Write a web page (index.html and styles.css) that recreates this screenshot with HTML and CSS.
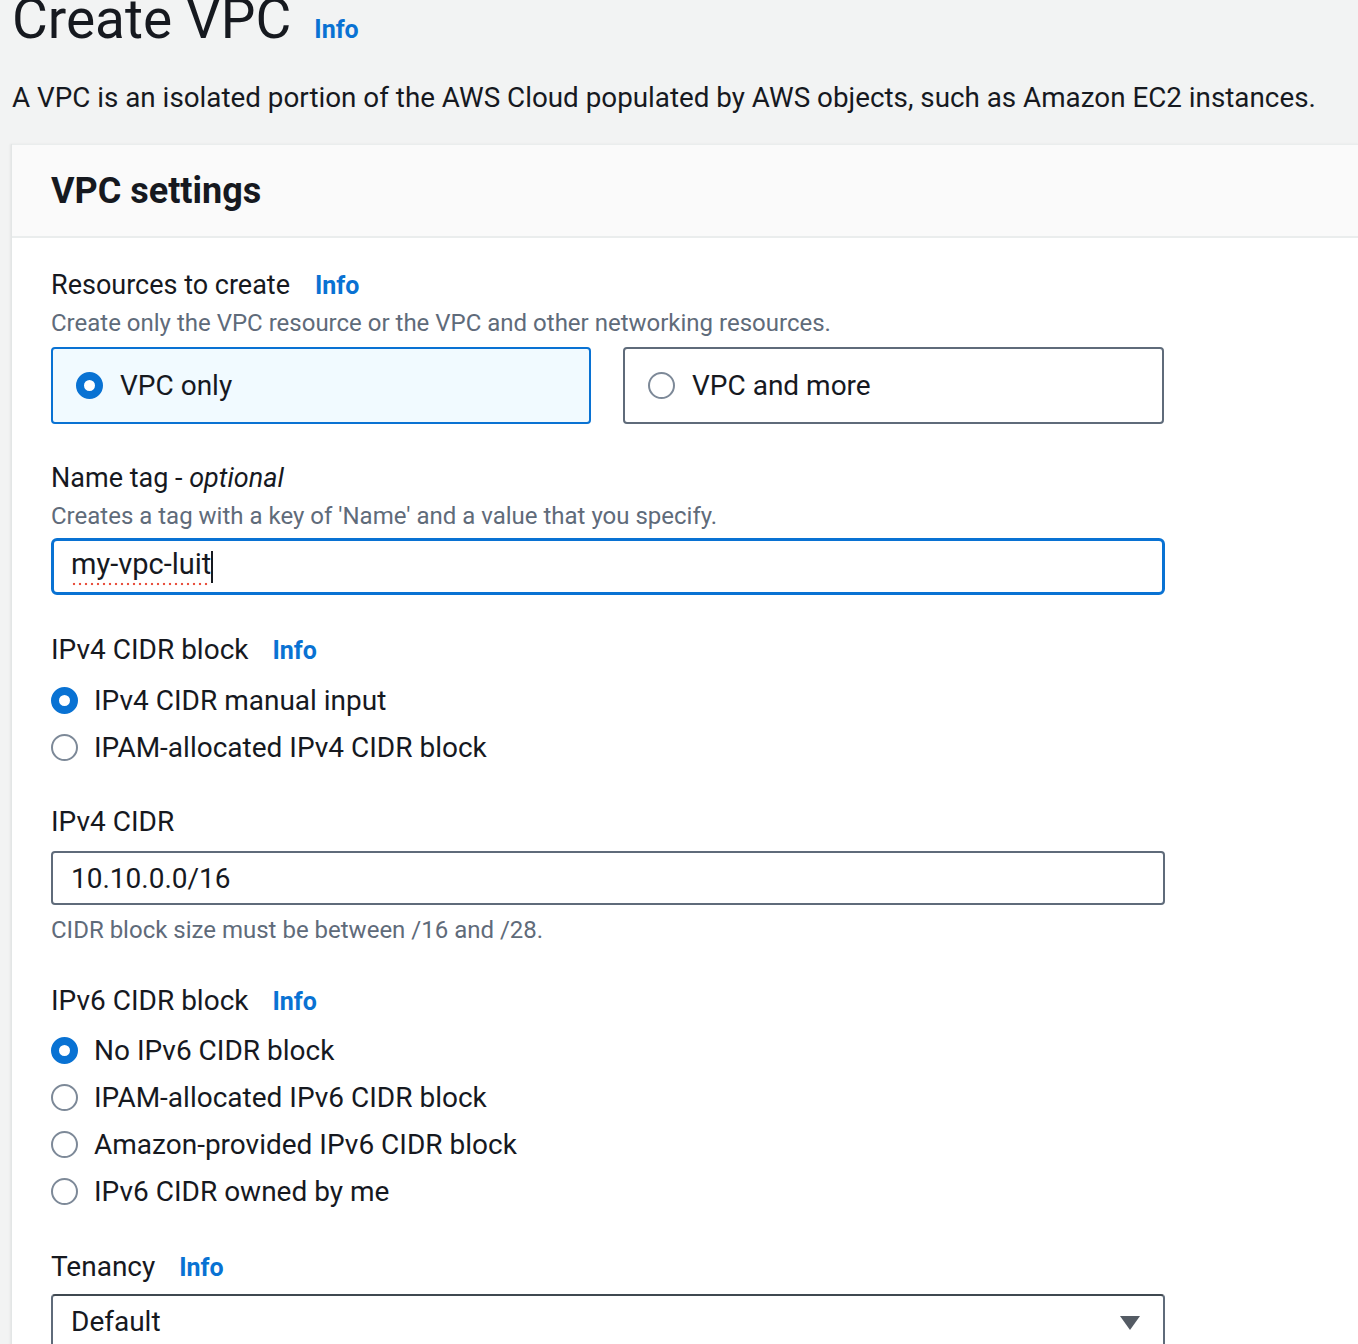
FILE: index.html
```html
<!DOCTYPE html>
<html lang="en">
<head>
<meta charset="utf-8">
<title>Create VPC</title>
<link rel="stylesheet" href="styles.css">
</head>
<body>
<div class="page">
  <header class="page-header">
    <div class="title-row">
      <h1 class="title">Create VPC</h1>
      <a class="info title-info" href="#">Info</a>
    </div>
    <p class="page-desc">A VPC is an isolated portion of the AWS Cloud populated by AWS objects, such as Amazon EC2 instances.</p>
  </header>

  <section class="card">
    <div class="card-header">
      <h2 class="card-title">VPC settings</h2>
    </div>
    <div class="card-body">

      <div class="field">
        <div class="label-row"><span class="label label-sm">Resources to create</span><a class="info" href="#">Info</a></div>
        <div class="desc">Create only the VPC resource or the VPC and other networking resources.</div>
        <div class="tiles">
          <div class="tile tile-selected"><span class="radio radio-on"></span><span class="tile-text">VPC only</span></div>
          <div class="tile"><span class="radio"></span><span class="tile-text">VPC and more</span></div>
        </div>
      </div>

      <div class="field field-name">
        <div class="label-row"><span class="label label-sm">Name tag - <em>optional</em></span></div>
        <div class="desc">Creates a tag with a key of 'Name' and a value that you specify.</div>
        <div class="input input-focus"><span class="misspelled">my-vpc-luit</span><span class="caret"></span></div>
      </div>

      <div class="field">
        <div class="label-row"><span class="label">IPv4 CIDR block</span><a class="info" href="#">Info</a></div>
        <div class="radio-list">
          <div class="radio-row"><span class="radio radio-on"></span><span class="radio-text">IPv4 CIDR manual input</span></div>
          <div class="radio-row"><span class="radio"></span><span class="radio-text">IPAM-allocated IPv4 CIDR block</span></div>
        </div>
      </div>

      <div class="field field-cidr">
        <div class="label-row"><span class="label">IPv4 CIDR</span></div>
        <div class="input input-plain"><span>10.10.0.0/16</span></div>
        <div class="hint">CIDR block size must be between /16 and /28.</div>
      </div>

      <div class="field field-tight">
        <div class="label-row"><span class="label">IPv6 CIDR block</span><a class="info" href="#">Info</a></div>
        <div class="radio-list radio-list-ipv6">
          <div class="radio-row"><span class="radio radio-on"></span><span class="radio-text">No IPv6 CIDR block</span></div>
          <div class="radio-row"><span class="radio"></span><span class="radio-text">IPAM-allocated IPv6 CIDR block</span></div>
          <div class="radio-row"><span class="radio"></span><span class="radio-text">Amazon-provided IPv6 CIDR block</span></div>
          <div class="radio-row"><span class="radio"></span><span class="radio-text">IPv6 CIDR owned by me</span></div>
        </div>
      </div>

      <div class="field field-tenancy">
        <div class="label-row"><span class="label">Tenancy</span><a class="info" href="#">Info</a></div>
        <div class="select">
          <span>Default</span>
          <svg class="caret-down" width="22" height="16" viewBox="0 0 22 16"><path d="M1 1 H21 L11 15 Z" fill="#545b64"/></svg>
        </div>
      </div>

    </div>
  </section>
</div>
</body>
</html>
```

FILE: styles.css
```css
html, body {
  margin: 0;
  padding: 0;
  background: #f2f3f3;
  overflow: hidden;
}
body {
  font-family: Roboto, "Noto Sans", "Liberation Sans", sans-serif;
  color: #16191f;
  width: 1358px;
  height: 1344px;
}
.page {
  padding-left: 12px;
}
.title-row {
  display: flex;
  align-items: baseline;
  gap: 23px;
  margin-top: -8px;
}
.title {
  margin: 0;
  font-size: 55px;
  line-height: 55px;
  font-weight: 400;
  color: #16191f;
}
.info {
  font-size: 25px;
  font-weight: 700;
  color: #0972d3;
  text-decoration: none;
}
.page-desc {
  margin: 31px 0 0 0;
  font-size: 27.8px;
  line-height: 40px;
}
.card {
  margin-top: 26px;
  margin-left: -1px;
  width: 1347px;
  background: #fff;
  border-left: 1px solid #e3e6e6;
  box-shadow: -1px 0 2px rgba(0,0,0,0.06);
}
.card-header {
  height: 94px;
  background: #fafafa;
  border-top: 1px solid #eaeded;
  border-bottom: 2px solid #eaeded;
  display: flex;
  align-items: center;
  padding-left: 39px;
  box-sizing: border-box;
}
.card-title {
  margin: 0;
  font-size: 36px;
  font-weight: 700;
  line-height: 40px;
}
.card-body {
  padding: 27px 0 0 39px;
  width: 1114px;
}
.field + .field {
  margin-top: 35px;
}
.field.field-name {
  margin-top: 34px;
}
.field.field-cidr {
  margin-top: 31px;
}
.field.field-tight {
  margin-top: 33px;
}
.field.field-tenancy {
  margin-top: 32px;
}
.label-row {
  display: flex;
  align-items: baseline;
  gap: 24px;
  height: 40px;
  line-height: 40px;
}
.label {
  font-size: 28px;
}
.label-sm {
  font-size: 27px;
}
.label-sm + .info {
  margin-left: 1px;
}
.label em {
  font-style: italic;
}
.desc, .hint {
  font-size: 24px;
  line-height: 36px;
  color: #5f6b7a;
}
.hint {
  margin-top: 7px;
}
.tiles {
  display: grid;
  grid-template-columns: 540px 541px;
  column-gap: 32px;
  margin-top: 6px;
}
.tile {
  height: 77px;
  box-sizing: border-box;
  border: 2px solid #5f6b7a;
  border-radius: 4px;
  display: flex;
  align-items: center;
  padding-left: 23px;
  gap: 17px;
  background: #fff;
}
.tile-selected {
  background: #f1faff;
  border-color: #0972d3;
}
.tile-text {
  font-size: 28px;
}
.radio {
  width: 27px;
  height: 27px;
  box-sizing: border-box;
  border-radius: 50%;
  border: 2px solid #7d8998;
  background: #fff;
  flex: 0 0 auto;
}
.radio-on {
  border: 8px solid #0972d3;
}
.radio-list {
  margin-top: 7px;
  display: flex;
  flex-direction: column;
}
.radio-list-ipv6 {
  margin-top: 6px;
}
.radio-row {
  height: 47px;
  display: flex;
  align-items: center;
  gap: 16px;
}
.radio-text {
  font-size: 28px;
}
.input, .select {
  box-sizing: border-box;
  width: 1114px;
  display: flex;
  align-items: center;
  padding-left: 17px;
  font-size: 28px;
  background: #fff;
}
.input-focus {
  margin-top: 4px;
  height: 57px;
  border: 3px solid #0972d3;
  border-radius: 6px;
  font-size: 29px;
}
.input-plain {
  margin-top: 9px;
  height: 54px;
  border: 2px solid #5f6b7a;
  border-radius: 4px;
  padding-left: 18px;
}
.misspelled {
  padding-bottom: 5px;
  background-image: radial-gradient(circle, #e8513f 1.2px, transparent 1.6px);
  background-size: 6px 4px;
  background-repeat: repeat-x;
  background-position: 0 100%;
}
.caret {
  display: inline-block;
  width: 2px;
  height: 32px;
  background: #16191f;
}
.select {
  margin-top: 7px;
  height: 60px;
  border: 2px solid #5f6b7a;
  border-top-color: #3f4850;
  border-radius: 4px 4px 0 0;
  border-bottom: none;
  padding-left: 18px;
  padding-right: 22px;
  justify-content: space-between;
  align-items: flex-start;
  padding-top: 9px;
}
.caret-down {
  margin-top: 10px;
}
```
